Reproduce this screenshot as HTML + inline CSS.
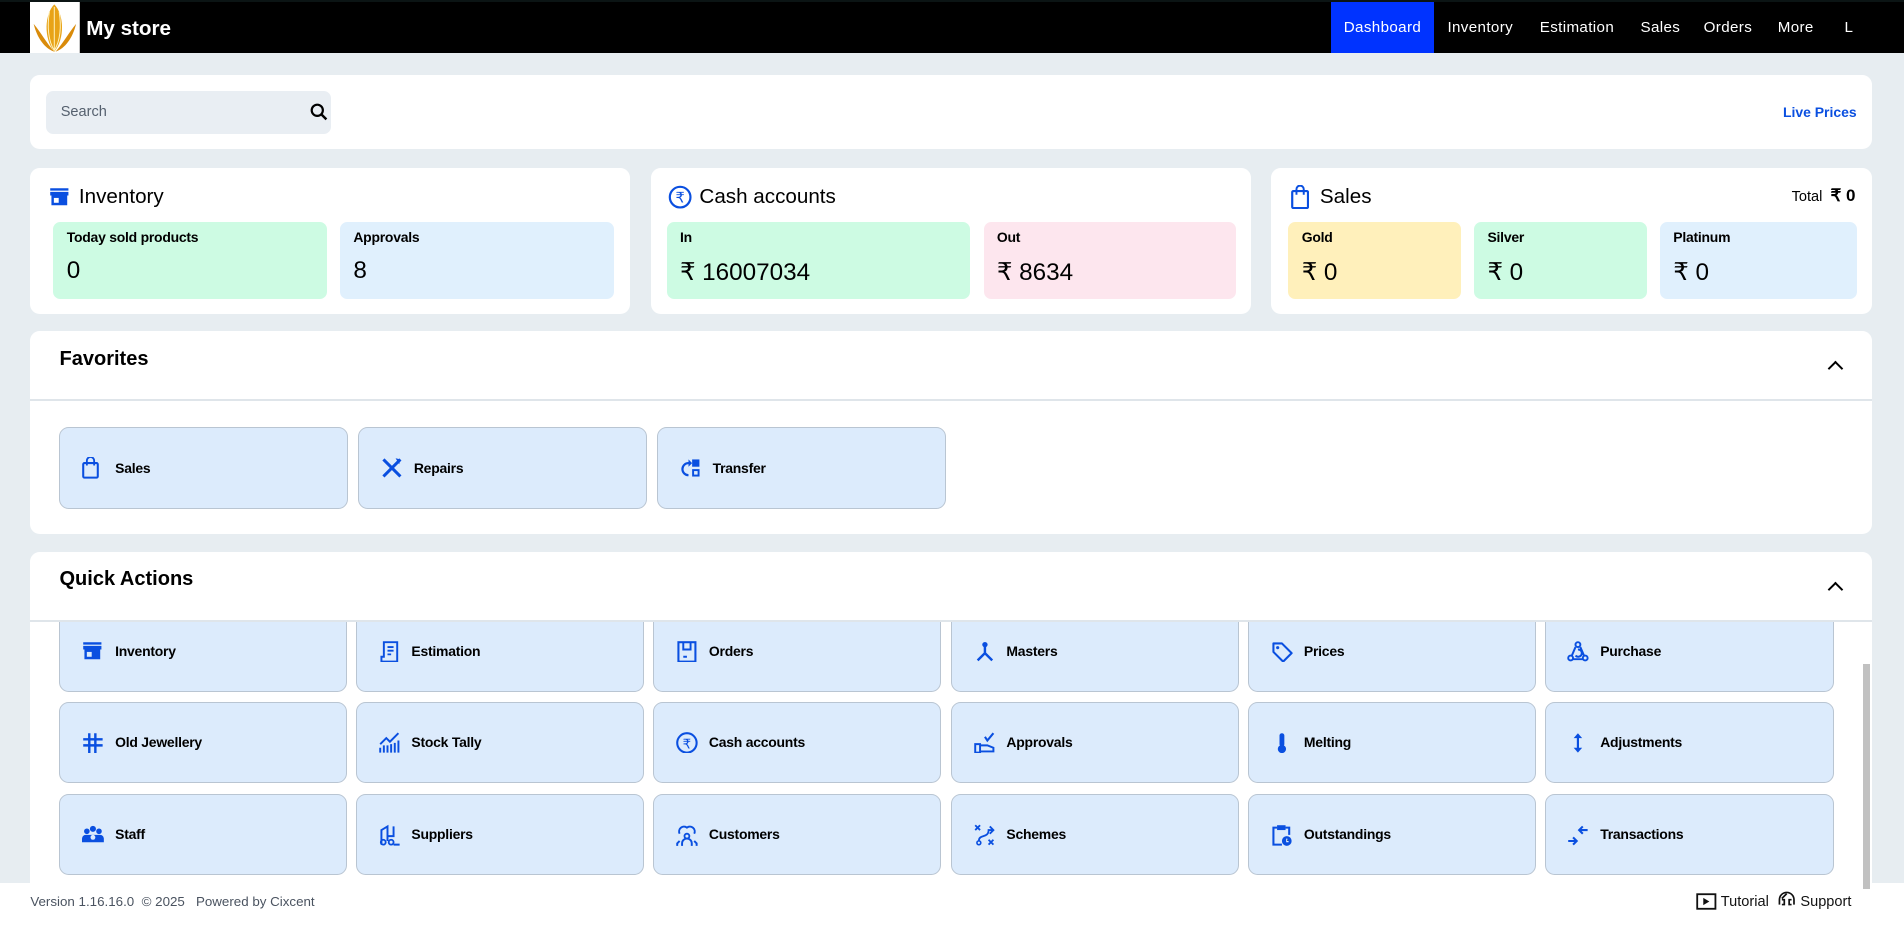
<!DOCTYPE html>
<html><head><meta charset="utf-8"><style>
html{zoom:1.2143}
*{box-sizing:border-box;margin:0;padding:0}
body{width:1568px;height:768px;overflow:hidden;background:#fff;font-family:"Liberation Sans",sans-serif;color:#000;position:relative}
.abs{position:absolute}
.nav{left:0;top:0;width:1568px;height:44px;background:#000;border-top:2px solid #0b1414}
.nav .it{position:absolute;top:0;height:42px;line-height:42px;color:#fff;font-size:12.5px;letter-spacing:.3px}
.main{left:0;top:44px;width:1568px;height:683px;background:#e7edf1}
.card{position:absolute;background:#fff;border-radius:8px}
.box{position:absolute;border-radius:6px;top:45px;height:63px}
.box .l{position:absolute;left:11px;top:6px;font-size:11.5px;font-weight:bold;letter-spacing:-.2px}
.box .v{position:absolute;left:11px;top:29px;font-size:20px}
.ct{position:absolute;top:14px;left:40px;font-size:17px}
.btn{position:absolute;background:#dcebfc;border:1px solid #b9c5d2;border-radius:8px;height:67px}
.btn svg{position:absolute;left:18px;top:50%;margin-top:-9px}
.btn span{position:absolute;left:45px;top:50%;margin-top:-7px;font-size:11.5px;font-weight:bold;letter-spacing:-.2px}
.chev{position:absolute;right:26px;width:9px;height:9px;border-left:2px solid #000;border-top:2px solid #000;transform:rotate(45deg)}
</style></head><body>
<div class="abs nav">
 <svg class="abs" style="left:25px;top:0" width="41" height="42" viewBox="0 0 41 42"><rect width="41" height="42" fill="#fff"/><path d="M20 2C12 10 11 30 20 41C29 30 28 10 20 2Z" fill="#e8a317"/><path d="M3 18C6 30 12 38 20 41C13 33 9 25 3 18Z" fill="#d98b0a"/><path d="M38 18C35 30 29 38 21 41C28 33 32 25 38 18Z" fill="#d98b0a"/><path d="M20 4V40M16 8C14 20 15 32 20 40M24 8C26 20 25 32 20 40" stroke="#fff3c0" stroke-width=".8" fill="none"/></svg>
 <div class="abs" style="left:71px;top:12px;color:#fff;font-size:17px;font-weight:bold">My store</div>
 <div class="it" style="left:1096px;width:85px;background:#0033ff;text-align:center">Dashboard</div>
 <div class="it" style="left:1192px">Inventory</div>
 <div class="it" style="left:1268px">Estimation</div>
 <div class="it" style="left:1351px">Sales</div>
 <div class="it" style="left:1403px">Orders</div>
 <div class="it" style="left:1464px">More</div>
 <div class="it" style="left:1519px">L</div>
</div>
<div class="abs main">
 <div class="card" style="left:25px;top:18px;width:1517px;height:61px">
  <div class="abs" style="left:13px;top:13px;width:235px;height:35px;background:#e9eef3;border-radius:6px">
   <span class="abs" style="left:12px;top:11px;font-size:12px;color:#55606e">Search</span>
   <svg class="abs" style="left:217px;top:10px" width="15" height="15" viewBox="0 0 15 15"><circle cx="6" cy="6" r="4.6" stroke="#000" stroke-width="1.8" fill="none"/><path d="M9.5 9.5L13.5 13.5" stroke="#000" stroke-width="2"/></svg>
  </div>
  <div class="abs" style="right:13px;top:24px;font-size:11.5px;font-weight:bold;color:#0a4fe0">Live Prices</div>
 </div>
 <div class="card" style="left:25px;top:94px;width:494px;height:121px">
  <svg class="abs" style="left:15px;top:16px" width="17" height="16" viewBox="0 0 17 16"><path d="M1 1h15v2H1zM1 4h15v3H1zM2 7h13v8H2z" fill="#0a4fe0"/><rect x="4" y="9" width="4" height="4" fill="#fff"/></svg>
  <div class="ct">Inventory</div>
  <div class="box" style="left:19px;width:225px;background:#cdfbe3"><div class="l">Today sold products</div><div class="v">0</div></div>
  <div class="box" style="left:255px;width:226px;background:#e0f0fd"><div class="l">Approvals</div><div class="v">8</div></div>
 </div>
 <div class="card" style="left:536px;top:94px;width:494px;height:121px">
  <svg class="abs" style="left:14px;top:14px" width="20" height="20" viewBox="0 0 20 20"><circle cx="10" cy="10" r="8.5" stroke="#0a4fe0" stroke-width="1.8" fill="none"/><text x="10" y="14.5" font-size="12" text-anchor="middle" fill="#0a4fe0" font-family="DejaVu Sans">₹</text></svg>
  <div class="ct">Cash accounts</div>
  <div class="box" style="left:13px;width:250px;background:#cdfbe3"><div class="l">In</div><div class="v">₹ 16007034</div></div>
  <div class="box" style="left:274px;width:208px;background:#fde6ee"><div class="l">Out</div><div class="v">₹ 8634</div></div>
 </div>
 <div class="card" style="left:1047px;top:94px;width:495px;height:121px">
  <svg class="abs" style="left:16px;top:14px" width="15" height="20" viewBox="0 0 15 20"><rect x="1" y="5" width="13" height="14" rx="1" stroke="#0a4fe0" stroke-width="1.8" fill="none"/><path d="M4.5 8V3.5a3 3 0 016 0V8" stroke="#0a4fe0" stroke-width="1.6" fill="none"/></svg>
  <div class="ct">Sales</div>
  <div class="abs" style="right:14px;top:15px;font-size:12px">Total &nbsp;<b style="font-size:14px">₹ 0</b></div>
  <div class="box" style="left:14px;width:142px;background:#fff0bb"><div class="l">Gold</div><div class="v">₹ 0</div></div>
  <div class="box" style="left:167px;width:142px;background:#cdfbe3"><div class="l">Silver</div><div class="v">₹ 0</div></div>
  <div class="box" style="left:320px;width:162px;background:#e0f0fd"><div class="l">Platinum</div><div class="v">₹ 0</div></div>
 </div>
 <div class="card" style="left:25px;top:229px;width:1517px;height:167px">
  <div class="abs" style="left:24px;top:14px;font-size:16.5px;font-weight:bold">Favorites</div>
  <div class="chev" style="top:26px"></div>
  <div class="abs" style="left:0;top:56px;width:1517px;height:1px;background:#dfe5ea"></div>
  <div class="btn" style="left:24px;top:79px;width:238px"><svg width="14" height="18" viewBox="0 0 14 18"><rect x="1" y="5" width="12" height="12" rx="1" stroke="#0a4fe0" stroke-width="1.7" fill="none"/><path d="M4 7V3a3 3 0 016 0v4" stroke="#0a4fe0" stroke-width="1.5" fill="none"/></svg><span>Sales</span></div>
  <div class="btn" style="left:270px;top:79px;width:238px"><svg width="18" height="18" viewBox="0 0 18 18"><path d="M2 2l14 14M16 2L2 16" stroke="#0a4fe0" stroke-width="2.5"/><path d="M12 1l4 1-1 4z" fill="#0a4fe0"/></svg><span>Repairs</span></div>
  <div class="btn" style="left:516px;top:79px;width:238px"><svg width="18" height="18" viewBox="0 0 18 18"><rect x="10" y="2" width="6" height="6" fill="#0a4fe0"/><rect x="10.8" y="10.8" width="4.5" height="4.5" stroke="#0a4fe0" stroke-width="1.6" fill="none"/><path d="M7 15a5 5 0 010-10h1" stroke="#0a4fe0" stroke-width="1.8" fill="none"/><path d="M7 2l3 3-3 3z" fill="#0a4fe0"/></svg><span>Transfer</span></div>
 </div>
 <div class="card" style="left:25px;top:411px;width:1517px;height:290px;border-radius:8px 8px 0 0;overflow:hidden">
  <div class="abs" style="left:24px;top:13px;font-size:16.5px;font-weight:bold">Quick Actions</div>
  <div class="chev" style="top:26px"></div>
  <div class="abs" style="left:0;top:56px;width:1517px;height:1px;background:#dfe5ea"></div>
  <div class="abs" style="left:0;top:57px;width:1517px;height:220px;overflow:hidden">
   <div class="abs" style="left:1508px;top:6px;width:9px;height:214px;background:#fff"></div>
   <div class="abs" style="left:1509px;top:35px;width:6px;height:185px;background:#c1c1c1"></div>
   <div id="g"></div>
  </div>
 </div>
</div>
<div class="abs" style="left:25px;top:736px;font-size:11px;color:#4a5360">Version 1.16.16.0 &nbsp;© 2025 &nbsp;&nbsp;Powered by Cixcent</div>
<div class="abs" style="left:1397px;top:733px;font-size:12px;color:#111">
 <svg style="vertical-align:-3px" width="17" height="14" viewBox="0 0 17 14"><rect x="1" y="1" width="15" height="12" stroke="#111" stroke-width="1.5" fill="none"/><path d="M6 4l5 3-5 3z" fill="#111"/></svg> Tutorial
 &nbsp;<svg style="vertical-align:-3px" width="16" height="16" viewBox="0 0 16 16"><path d="M2 12V8a6 6 0 0112 0v4M4 12h2v-4H4M12 12h-2v-4h2M8 3c-2 2-3 3-4 4" stroke="#111" stroke-width="1.4" fill="none"/></svg> Support
</div>
<script>
const B='#0a4fe0';
const ic={
inv:`<path d="M1 1h15v2H1zM1 4h15v3H1zM2 7h13v8H2z" fill="${B}"/><rect x="4" y="9" width="4" height="4" fill="#dcebfc"/>`,
est:`<path d="M4 1h11v16H2v-4h2z" stroke="${B}" stroke-width="1.6" fill="none"/><path d="M7 5h5M7 8h5M7 11h3" stroke="${B}" stroke-width="1.5"/>`,
ord:`<rect x="2" y="1" width="14" height="16" stroke="${B}" stroke-width="1.7" fill="none"/><path d="M6 1v6h6V1M6 13h3" stroke="${B}" stroke-width="1.6" fill="none"/>`,
mas:`<circle cx="9" cy="3" r="2.2" fill="${B}"/><path d="M9 4v6L3 16M9 10l6 6" stroke="${B}" stroke-width="2" fill="none"/>`,
pri:`<path d="M2 2h7l8 8-7 7-8-8z" stroke="${B}" stroke-width="1.7" fill="none" stroke-linejoin="round"/><circle cx="5.5" cy="5.5" r="1.3" fill="${B}"/>`,
pur:`<circle cx="9" cy="3" r="2" stroke="${B}" stroke-width="1.6" fill="none"/><circle cx="3" cy="14" r="2" stroke="${B}" stroke-width="1.6" fill="none"/><circle cx="15" cy="14" r="2" stroke="${B}" stroke-width="1.6" fill="none"/><path d="M7 5L4 12M11 5l3 7M5 15h8M9 7a3 3 0 11-2 5" stroke="${B}" stroke-width="1.6" fill="none"/>`,
old:`<path d="M6 1v17M11 1v17M1 6h16M1 11h16" stroke="${B}" stroke-width="2"/>`,
stk:`<path d="M1 17v-4M4 17v-6M7 17v-6M10 17v-7M13 17v-8M16 17V7" stroke="${B}" stroke-width="1.6"/><path d="M1 10l5-5 3 3 7-7" stroke="${B}" stroke-width="1.6" fill="none"/>`,
cas:`<circle cx="9" cy="9" r="8" stroke="${B}" stroke-width="1.7" fill="none"/><text x="9" y="13.5" font-size="11" text-anchor="middle" fill="${B}" font-family="DejaVu Sans">₹</text>`,
app:`<path d="M1 10h4v7H1zM5 11h6l5 2v3H5" stroke="${B}" stroke-width="1.6" fill="none"/><path d="M9 4l2 3 5-6" stroke="${B}" stroke-width="1.7" fill="none"/>`,
mel:`<rect x="7" y="1" width="4" height="11" rx="2" fill="${B}"/><circle cx="9" cy="14" r="3.4" fill="${B}"/>`,
adj:`<path d="M9 2v14" stroke="${B}" stroke-width="1.8"/><path d="M5.5 5L9 1l3.5 4zM5.5 13L9 17l3.5-4z" fill="${B}"/>`,
stf:`<circle cx="4" cy="6" r="2.3" fill="${B}"/><circle cx="9" cy="4" r="2.5" fill="${B}"/><circle cx="14" cy="6" r="2.3" fill="${B}"/><path d="M0 15v-3a3 3 0 013-3h12a3 3 0 013 3v3z" fill="${B}"/><circle cx="9" cy="11" r="2" fill="#dcebfc"/>`,
sup:`<path d="M2 17V5l5-3v12M7 10h5V2M12 17h5" stroke="${B}" stroke-width="1.6" fill="none"/><circle cx="3.5" cy="15" r="2" stroke="${B}" stroke-width="1.5" fill="none"/><circle cx="10" cy="15" r="2" stroke="${B}" stroke-width="1.5" fill="none"/>`,
cus:`<path d="M3 8a4 4 0 016-5 4 4 0 016 5" stroke="${B}" stroke-width="1.6" fill="none"/><circle cx="9" cy="10" r="2" stroke="${B}" stroke-width="1.5" fill="none"/><path d="M5 18v-2a4 4 0 018 0v2M1 18v-2l2-2M17 18v-2l-2-2" stroke="${B}" stroke-width="1.6" fill="none"/>`,
sch:`<path d="M1 1l4 4M5 1L1 5M12 13l4 4M16 13l-4 4" stroke="${B}" stroke-width="1.5"/><path d="M4 14c0-6 8-2 8-9h3" stroke="${B}" stroke-width="1.5" fill="none"/><circle cx="4" cy="15.5" r="1.6" stroke="${B}" stroke-width="1.3" fill="none"/><path d="M13 2l3 3-3 3" stroke="${B}" stroke-width="1.5" fill="none"/>`,
out:`<path d="M5 3H2v14h7M12 3h3v6" stroke="${B}" stroke-width="1.7" fill="none"/><rect x="5" y="1" width="7" height="4" fill="${B}"/><circle cx="13" cy="14" r="4" fill="${B}"/><path d="M13 12v2.5h1.5" stroke="#dcebfc" stroke-width="1"/>`,
tra:`<path d="M1 14h7M5 11l3 3-3 3M17 5h-7M13 2l-3 3 3 3" stroke="${B}" stroke-width="1.7" fill="none"/>`
};
const items=[['inv','Inventory'],['est','Estimation'],['ord','Orders'],['mas','Masters'],['pri','Prices'],['pur','Purchase'],
['old','Old Jewellery'],['stk','Stock Tally'],['cas','Cash accounts'],['app','Approvals'],['mel','Melting'],['adj','Adjustments'],
['stf','Staff'],['sup','Suppliers'],['cus','Customers'],['sch','Schemes'],['out','Outstandings'],['tra','Transactions']];
const xs=[24,268,513,758,1003,1247],ys=[-9,66,142],ws=[237,237,237,237,237,238];
let h='';
items.forEach((it,i)=>{const c=i%6,r=Math.floor(i/6);
h+=`<div class="btn" style="left:${xs[c]}px;top:${ys[r]}px;width:${ws[c]}px"><svg width="18" height="18" viewBox="0 0 18 18">${ic[it[0]]}</svg><span>${it[1]}</span></div>`});
document.getElementById('g').outerHTML=h;
</script>
</body></html>
